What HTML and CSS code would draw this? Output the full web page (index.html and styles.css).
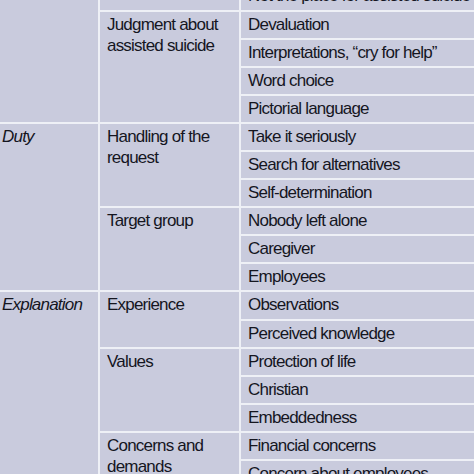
FILE: index.html
```html
<!DOCTYPE html>
<html>
<head>
<meta charset="utf-8">
<link rel="stylesheet" href="styles.css">
</head>
<body>
<div class="table">
  <div class="group">
    <div class="g-label"></div>
    <div class="subs">
      <div class="sub">
        <div class="s-label"></div>
        <div class="items">
          <div class="item">Not the place for assisted suicide</div>
        </div>
      </div>
      <div class="sub">
        <div class="s-label">Judgment about<br>assisted suicide</div>
        <div class="items">
          <div class="item">Devaluation</div>
          <div class="item">Interpretations, “cry for help”</div>
          <div class="item">Word choice</div>
          <div class="item">Pictorial language</div>
        </div>
      </div>
    </div>
  </div>
  <div class="group">
    <div class="g-label">Duty</div>
    <div class="subs">
      <div class="sub">
        <div class="s-label">Handling of the<br>request</div>
        <div class="items">
          <div class="item">Take it seriously</div>
          <div class="item">Search for alternatives</div>
          <div class="item">Self-determination</div>
        </div>
      </div>
      <div class="sub">
        <div class="s-label">Target group</div>
        <div class="items">
          <div class="item">Nobody left alone</div>
          <div class="item">Caregiver</div>
          <div class="item">Employees</div>
        </div>
      </div>
    </div>
  </div>
  <div class="group">
    <div class="g-label">Explanation</div>
    <div class="subs">
      <div class="sub">
        <div class="s-label">Experience</div>
        <div class="items">
          <div class="item">Observations</div>
          <div class="item">Perceived knowledge</div>
        </div>
      </div>
      <div class="sub">
        <div class="s-label">Values</div>
        <div class="items">
          <div class="item">Protection of life</div>
          <div class="item">Christian</div>
          <div class="item">Embeddedness</div>
        </div>
      </div>
      <div class="sub">
        <div class="s-label">Concerns and<br>demands</div>
        <div class="items">
          <div class="item">Financial concerns</div>
          <div class="item">Concern about employees</div>
        </div>
      </div>
    </div>
  </div>
</div>
</body>
</html>
```
FILE: styles.css
```css
html, body {
  margin: 0;
  padding: 0;
  width: 474px;
  height: 474px;
  overflow: hidden;
  background: #c9cbdd;
}
.table {
  margin-top: -16.6px;
  display: flex;
  flex-direction: column;
  gap: 2px;
  background: #eef0f6;
  font-family: "Liberation Sans", Arial, sans-serif;
  font-size: 17px;
  letter-spacing: -0.8px;
  line-height: 21px;
  color: #15161f;
}
.group {
  display: flex;
  gap: 2px;
}
.g-label {
  width: 96px;
  flex: none;
  padding: 2px 0 0 2px;
  background: #c9cbdd;
  font-style: italic;
  white-space: nowrap;
}
.subs {
  flex: 1;
  display: flex;
  flex-direction: column;
  gap: 2px;
}
.sub {
  display: flex;
  gap: 2px;
}
.s-label {
  width: 132px;
  flex: none;
  padding: 2px 0 0 7px;
  background: #c9cbdd;
  white-space: nowrap;
}
.items {
  flex: 1;
  display: flex;
  flex-direction: column;
  gap: 2px;
}
.item {
  height: 24.1px;
  padding: 2px 0 0 7px;
  background: #c9cbdd;
  white-space: nowrap;
}
```
